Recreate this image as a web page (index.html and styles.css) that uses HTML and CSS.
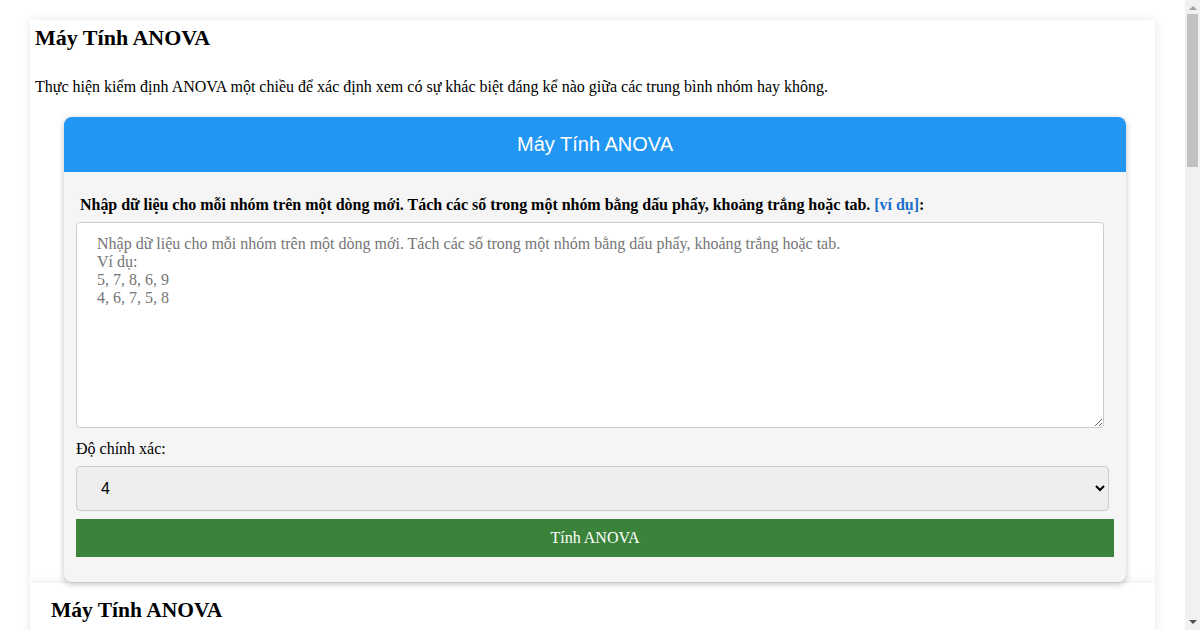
FILE: index.html
```html
<!DOCTYPE html>
<html lang="vi">
<head>
  <meta charset="UTF-8" />
  <meta name="viewport" content="width=device-width, initial-scale=1.0"/>
  <title>Máy Tính ANOVA</title>
  <link rel="stylesheet" href="styles.css">
</head>
<body>
  <div class="page">
    <div class="section">
      <h1>Máy Tính ANOVA</h1>
      <p class="intro">Thực hiện kiểm định ANOVA một chiều để xác định xem có sự khác biệt đáng kể nào giữa các trung bình nhóm hay không.</p>

      <div class="calc-card">
        <div class="calc-header">Máy Tính ANOVA</div>
        <div class="calc-body">
          <label class="data-label" for="data">Nhập dữ liệu cho mỗi nhóm trên một dòng mới. Tách các số trong một nhóm bằng dấu phẩy, khoảng trắng hoặc tab. <a href="#">[ví dụ]</a>:</label>
          <textarea id="data" placeholder="Nhập dữ liệu cho mỗi nhóm trên một dòng mới. Tách các số trong một nhóm bằng dấu phẩy, khoảng trắng hoặc tab.&#10;Ví dụ:&#10;5, 7, 8, 6, 9&#10;4, 6, 7, 5, 8"></textarea>
          <label class="field-label" for="precision">Độ chính xác:</label>
          <select id="precision">
            <option>2</option>
            <option>3</option>
            <option selected>4</option>
            <option>5</option>
            <option>6</option>
          </select>
          <button type="button">Tính ANOVA</button>
        </div>
      </div>
    </div>

    <div class="section second">
      <h2>Máy Tính ANOVA</h2>
    </div>
  </div>

  <!-- scrollbar drawn by hand, the headless browser hides the native one -->
  <div class="scrollbar">
    <span class="arrow up"></span>
    <span class="thumb"></span>
    <span class="arrow down"></span>
  </div>
</body>
</html>
```

FILE: styles.css
```css
body, html {
  margin: 0;
  padding: 0;
  height: 100%;
  background: #fff;
  font-family: 'Liberation Serif', 'Times New Roman', serif;
  color: #000;
  overflow: hidden;
}

.page {
  width: 1185px;
  padding-top: 20px;
}

.section {
  box-sizing: border-box;
  max-width: 1125px;
  margin: 0 auto;
  padding: 5px 5px 1px;
  background: #fff;
  box-shadow: 0 0 10px rgba(0,0,0,0.1);
}

.section h1 {
  font-size: 22px;
  line-height: 26px;
  margin: 0 0 27px;
}

.intro {
  font-size: 16px;
  line-height: 18px;
  margin: 0 0 21px;
}

.calc-card {
  position: relative;
  z-index: 2;
  margin: 0 24px 0 29px;
  background: #f5f5f5;
  border-radius: 8px;
  box-shadow: 0 2px 6px rgba(0,0,0,0.25);
  overflow: hidden;
}

.calc-header {
  height: 55px;
  line-height: 55px;
  background: #2196f3;
  color: #fff;
  text-align: center;
  font-family: 'Liberation Sans', Arial, sans-serif;
  font-size: 20px;
}

.calc-body {
  padding: 12px 12px 25px;
}

.data-label {
  display: block;
  font-weight: bold;
  font-size: 16px;
  letter-spacing: -0.03px;
  line-height: 18px;
  padding: 12px 4px 8px;
}

.data-label a {
  color: #1a6fc9;
  text-decoration: none;
}

textarea {
  display: block;
  box-sizing: border-box;
  width: calc(100% - 10px);
  height: 206px;
  padding: 12px 20px;
  border: 1px solid #ccc;
  border-radius: 4px;
  font-family: 'Liberation Serif', 'Times New Roman', serif;
  font-size: 16px;
  line-height: 18px;
  background: #fff;
}

textarea::placeholder {
  color: #757575;
}

.field-label {
  display: block;
  font-size: 16px;
  line-height: 18px;
  margin: 12px 0 8px;
}

select {
  display: block;
  box-sizing: border-box;
  width: calc(100% - 5px);
  height: 45px;
  padding: 0 20px;
  border: 1px solid #ccc;
  border-radius: 4px;
  background: #eee;
  font-family: 'Liberation Sans', Arial, sans-serif;
  font-size: 16px;
  color: #000;
}

.calc-body button {
  display: block;
  width: 100%;
  height: 38px;
  margin-top: 8px;
  border: none;
  background: #3b833b;
  color: #fff;
  font-family: 'Liberation Serif', 'Times New Roman', serif;
  font-size: 16px;
  cursor: pointer;
}

.second {
  padding: 15px 21px 300px;
}

.second h2 {
  font-size: 21.5px;
  line-height: 24px;
  margin: 0;
}

.scrollbar {
  position: fixed;
  top: 0;
  right: 0;
  width: 15px;
  height: 100%;
  background: #f1f1f1;
  display: flex;
  flex-direction: column;
  align-items: center;
}

.scrollbar .arrow {
  width: 0;
  height: 0;
  border-left: 4px solid transparent;
  border-right: 4px solid transparent;
}

.scrollbar .up {
  margin: 6px 0 4px;
  border-bottom: 4px solid #a3a3a3;
}

.scrollbar .down {
  margin: auto 0 6px;
  border-top: 4px solid #505050;
}

.scrollbar .thumb {
  width: 11px;
  height: 153px;
  background: #c1c1c1;
}
```
